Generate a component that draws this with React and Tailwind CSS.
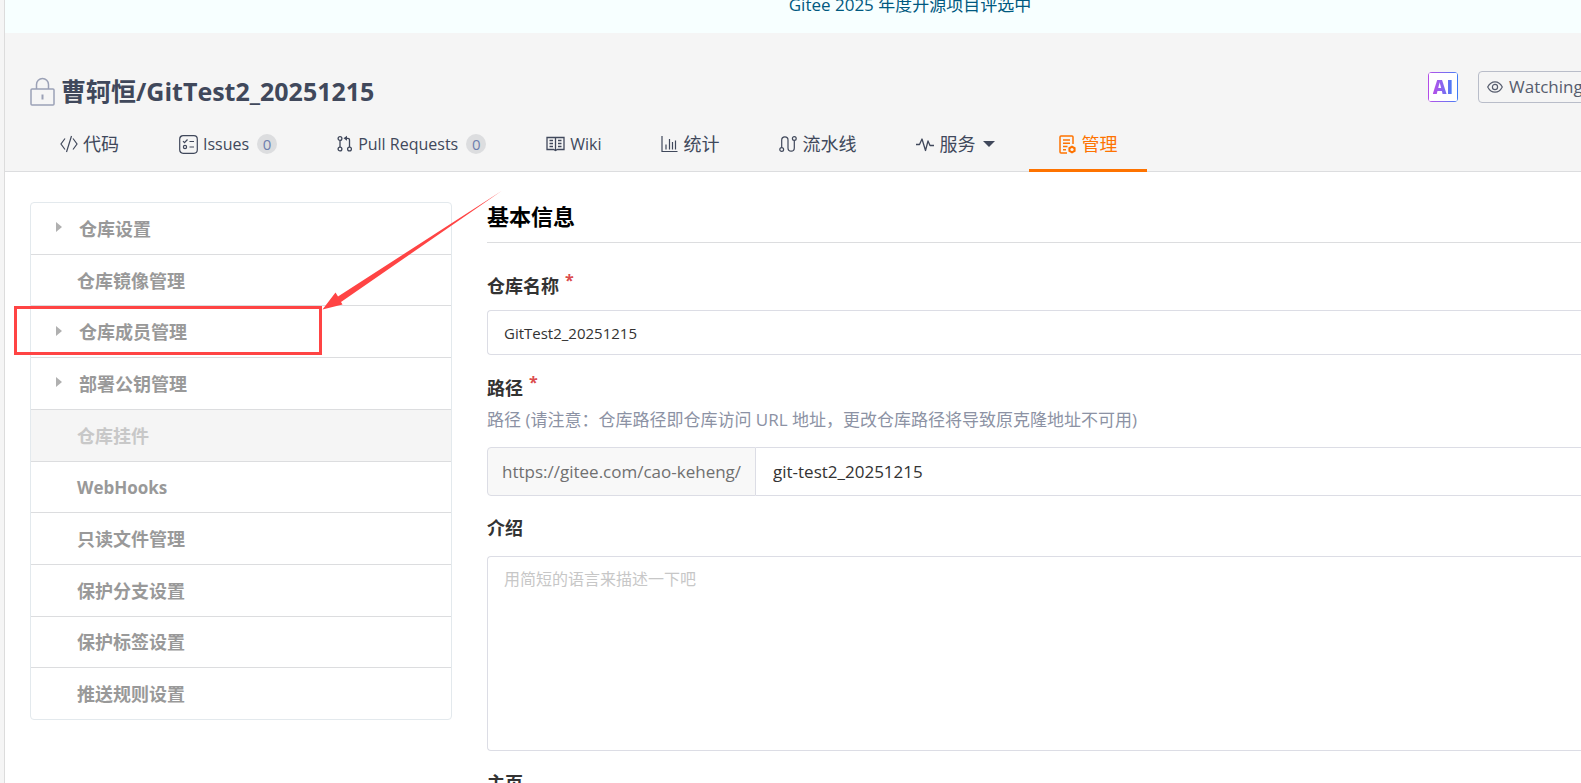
import { clsx } from 'clsx';

const RepoLockIcon = () => (
  <svg width="25" height="29" viewBox="0 0 25 29" fill="none" stroke="#9ba1b6" strokeWidth="1.500" aria-hidden="true">
    <rect x="1" y="12" width="23" height="16" rx="1" />
    <path d="M6.500 12V7.500a6 6 0 0 1 12 0V12" />
    <path d="M12.500 17.500v5" strokeWidth="2" />
  </svg>
);

const CodeIcon = () => (
  <svg width="18" height="18" viewBox="0 0 18 18" fill="none" stroke="currentColor" strokeWidth="1.200" aria-hidden="true">
    <path d="M5 3.500 1 9l4 5.500M13 3.500 17 9l-4 5.500M11.500 1 6.500 17" />
  </svg>
);

const IssuesIcon = () => (
  <svg width="19" height="19" viewBox="0 0 19 19" fill="none" stroke="currentColor" strokeWidth="1.200" aria-hidden="true">
    <rect x="0.700" y="0.700" width="17.600" height="17.600" rx="3.500" />
    <path d="M4 6.200 5.500 7.700 8.500 4.500M10.500 6.500H15M10.500 12H15" />
    <circle cx="6" cy="12" r="1.600" />
  </svg>
);

const PullIcon = () => (
  <svg width="16" height="18" viewBox="0 0 16 18" fill="none" stroke="currentColor" strokeWidth="1.300" aria-hidden="true">
    <circle cx="3" cy="3.500" r="1.900" />
    <circle cx="3" cy="14" r="1.900" />
    <circle cx="12.500" cy="14" r="1.900" />
    <path d="M3 5.400v6.700M12.500 12.100V5q0-1.700-1.700-1.700H8" />
    <path d="M10 .8v5L6.500 3.300z" fill="currentColor" stroke="none" />
  </svg>
);

const WikiIcon = () => (
  <svg width="19" height="16" viewBox="0 0 19 16" fill="none" stroke="currentColor" strokeWidth="1.300" aria-hidden="true">
    <path d="M1 1.500h17v12h-6.500L9.500 14.500 7.500 13.500H1zM9.500 1.500v12.500" />
    <path d="M3.500 4.500h3.500M3.500 7.500h3.500M3.500 10.500h3.500M12 4.500h3.500M12 7.500h3.500M12 10.500h3.500" />
  </svg>
);

const StatsIcon = () => (
  <svg width="17" height="18" viewBox="0 0 17 18" fill="none" stroke="currentColor" strokeWidth="1.200" aria-hidden="true">
    <path d="M1 1v15.500h15.500M5 14.500V9.500M8.500 14.500V4M11.500 14.500V7M14.500 14.500V5.500" />
  </svg>
);

const PipelineIcon = () => (
  <svg width="18" height="18" viewBox="0 0 18 18" fill="none" stroke="currentColor" strokeWidth="1.200" aria-hidden="true">
    <circle cx="2.700" cy="14.500" r="1.900" />
    <circle cx="15.300" cy="3.500" r="1.900" />
    <path d="M2.700 12.500V5a3.100 3.100 0 0 1 6.300 0v8a3.100 3.100 0 0 0 6.300 0V5.500" />
  </svg>
);

const PulseIcon = () => (
  <svg width="18" height="16" viewBox="0 0 18 16" fill="none" stroke="currentColor" strokeWidth="1.300" strokeLinejoin="round" aria-hidden="true">
    <path d="M0 8.500h3.500L6 3l3.500 11.500L12 5l2 4.500h4" />
  </svg>
);

const ManageIcon = () => (
  <svg width="17" height="19" viewBox="0 0 17 19" fill="none" stroke="currentColor" strokeWidth="1.500" aria-hidden="true">
    <path d="M14 9V2q0-1-1-1H2Q1 1 1 2v15q0 1 1 1h6" />
    <path d="M4 5h7M4 8.300h7M4 11.500h4.500M4 14.700h3" />
    <path d="M13 10.500l3.600 2v4L13 18.500l-3.600-2v-4z" fill="currentColor" stroke="none" />
    <circle cx="13" cy="14.500" r="1.600" fill="#f5f5f5" stroke="none" />
  </svg>
);

const EyeIcon = () => (
  <svg width="16" height="12" viewBox="0 0 16 12" fill="none" stroke="currentColor" strokeWidth="1.200" aria-hidden="true">
    <path d="M.7 6C2.500 2.500 5 .8 8 .8S13.500 2.500 15.300 6C13.500 9.500 11 11.200 8 11.200S2.500 9.500.7 6z" />
    <circle cx="8" cy="6" r="2.600" />
  </svg>
);

const TABS = [
  { label: '代码', icon: CodeIcon },
  { label: 'Issues', icon: IssuesIcon, count: 0, latin: true },
  { label: 'Pull Requests', icon: PullIcon, count: 0, latin: true },
  { label: 'Wiki', icon: WikiIcon, latin: true },
  { label: '统计', icon: StatsIcon },
  { label: '流水线', icon: PipelineIcon },
  { label: '服务', icon: PulseIcon, dropdown: true },
  { label: '管理', icon: ManageIcon, active: true },
];

const MENU = [
  { label: '仓库设置', expandable: true },
  { label: '仓库镜像管理' },
  { label: '仓库成员管理', expandable: true, marked: true },
  { label: '部署公钥管理', expandable: true },
  { label: '仓库挂件', disabled: true },
  { label: 'WebHooks', latin: true },
  { label: '只读文件管理' },
  { label: '保护分支设置' },
  { label: '保护标签设置' },
  { label: '推送规则设置' },
];

function Tab({ label, icon: Icon, count, dropdown, active, latin }) {
  return (
    <a
      href="#"
      className={clsx(
        'flex h-full items-center whitespace-nowrap border-b-[3px] px-[30px]',
        active ? 'border-[#fe7300] text-[#fe7300]' : 'border-transparent text-[#40485b]'
      )}
    >
      <Icon />
      <span className={clsx('ml-[5px]', latin ? 'text-[16px]' : 'text-[18px]')}>{label}</span>
      {count != null && (
        <span className="ml-2 flex h-5 w-5 items-center justify-center rounded-full bg-[#dcdddf] text-[15px] text-[#6e7fae]">
          {count}
        </span>
      )}
      {dropdown && <span className="ml-2 mr-1 border-x-[6px] border-t-[6px] border-x-transparent border-t-[#40485b]" />}
    </a>
  );
}

function FieldLabel({ htmlFor, required, children }) {
  return (
    <label htmlFor={htmlFor} className="flex h-6 items-center text-[18px] font-bold text-[#333]">
      {children}
      {required && <span className="mb-3 ml-1.5 text-[16px] text-[#db4c4c]">*</span>}
    </label>
  );
}

function SideMenu() {
  return (
    <nav className="relative w-[422px] shrink-0">
      <ul className="flex h-[518px] flex-col divide-y divide-[#dcdddf] rounded border border-[#e3e9ed]">
        {MENU.map((item) => (
          <li key={item.label} className={clsx('relative flex-1', item.disabled && 'bg-[#f5f5f5]')}>
            <a
              href="#"
              className={clsx(
                'flex h-full items-center pt-0.5 font-bold',
                item.latin ? 'text-[17px]' : 'text-[18px]',
                item.disabled ? 'text-[#c8c8c8]' : 'text-[#999]',
                item.expandable ? 'pl-[25px]' : 'pl-[46px]'
              )}
            >
              {item.expandable && (
                <span className="mb-1 mr-[17px] border-y-[5px] border-l-[6px] border-y-transparent border-l-[#b0b0b0]" />
              )}
              {item.label}
            </a>
            {item.marked && (
              <>
                <span className="pointer-events-none absolute -left-[17px] top-0 h-[49px] w-[308px] border-[3px] border-[#ff4444]" />
                <svg
                  className="pointer-events-none absolute -top-[116px] left-[291px]"
                  width="182"
                  height="120"
                  viewBox="0 0 182 120"
                  aria-hidden="true"
                >
                  <path d="M.5 119.500 13.500 102.500 16 106.500 179.500 1 19 112 20.500 114.500z" fill="#ff4444" />
                </svg>
              </>
            )}
          </li>
        ))}
      </ul>
    </nav>
  );
}

export default function App() {
  return (
    <div className="h-screen overflow-hidden bg-[#f5f5f5] pl-1 font-['Open_Sans','Noto_Sans_CJK_SC',sans-serif]">
      <div className="min-h-full border-l border-[#dcdcdc] bg-white">
        {/* Announcement */}
        <div className="flex h-[33px] items-end justify-center bg-[#f7ffff] pb-4 pl-[234px]">
          <a href="#" className="whitespace-nowrap text-[17px] leading-6 text-[#005980]">
            Gitee 2025 年度开源项目评选中
          </a>
        </div>

        {/* Repository header */}
        <header className="border-b border-[#dcdddf] bg-[#f5f5f5]">
          <div className="flex h-[86px] items-start pl-[25px] pt-[38px]">
            <div className="flex items-center gap-1.5 pt-1">
              <RepoLockIcon />
              <h1 className="whitespace-nowrap text-[25px] font-bold leading-8 text-[#40485b]">
                <a href="#">曹轲恒/GitTest2_20251215</a>
              </h1>
            </div>
            <div className="ml-auto flex w-[153px] shrink-0 items-center gap-5 overflow-hidden">
              <button type="button" className="shrink-0 rounded-sm bg-linear-to-r from-[#b44be8] to-[#3b7bf6] p-px">
                <span className="flex h-7 w-7 items-center justify-center rounded-[1px] bg-white">
                  <span className="bg-linear-to-r from-[#b44be8] to-[#3b7bf6] bg-clip-text text-[19px] font-extrabold leading-7 text-transparent">
                    AI
                  </span>
                </span>
              </button>
              <button
                type="button"
                className="flex h-8 shrink-0 items-center gap-1.5 rounded-sm border border-[#b9bdc9] px-2 text-[17px] text-[#575d6e]"
              >
                <EyeIcon />
                Watching
              </button>
            </div>
          </div>
          <nav className="-mb-px flex h-[53px] pl-[25px]">
            {TABS.map((tab) => (
              <Tab key={tab.label} {...tab} />
            ))}
          </nav>
        </header>

        <div className="flex items-start gap-[35px] pl-[25px] pt-[30px]">
          <SideMenu />

          <main className="min-w-0 flex-1">
            <h2 className="h-[41px] border-b border-[#dcdddf] text-[22px] font-bold leading-7 text-black">基本信息</h2>

            <form className="pt-[31px]">
              <FieldLabel htmlFor="repo-name" required>仓库名称</FieldLabel>
              <input
                id="repo-name"
                defaultValue="GitTest2_20251215"
                className="mt-3 block h-[45px] w-full rounded-l border border-r-0 border-[#dcdde5] px-4 text-[15px] text-[#333]"
              />

              <div className="mt-[21px]">
                <FieldLabel htmlFor="repo-path" required>路径</FieldLabel>
              </div>
              <p className="mt-2 whitespace-nowrap text-[17px] leading-6 text-[#8c92a4]">
                路径 (请注意：仓库路径即仓库访问 URL 地址，更改仓库路径将导致原克隆地址不可用)
              </p>
              <div className="mt-[15px] flex h-[49px]">
                <span className="flex w-[269px] shrink-0 items-center rounded-l border border-[#dcdde5] bg-[#f8f8f8] pl-[14px] text-[17px] text-[#707070]">
                  https://gitee.com/cao-keheng/
                </span>
                <input
                  id="repo-path"
                  defaultValue="git-test2_20251215"
                  className="min-w-0 flex-1 border-y border-[#dcdde5] px-[17px] text-[17px] text-[#333]"
                />
              </div>

              <div className="mt-5">
                <FieldLabel htmlFor="repo-intro">介绍</FieldLabel>
              </div>
              <textarea
                id="repo-intro"
                placeholder="用简短的语言来描述一下吧"
                className="mt-4 block h-[195px] w-full resize-none rounded-l border border-r-0 border-[#dcdde5] px-4 py-[10px] text-[16px] leading-6 placeholder:text-[#c7c7c7]"
              />

              <div className="mt-5">
                <FieldLabel htmlFor="repo-home">主页</FieldLabel>
              </div>
              <input id="repo-home" className="mt-3 block h-[45px] w-full rounded-l border border-r-0 border-[#dcdde5] px-4" />
            </form>
          </main>
        </div>
      </div>
    </div>
  );
}
